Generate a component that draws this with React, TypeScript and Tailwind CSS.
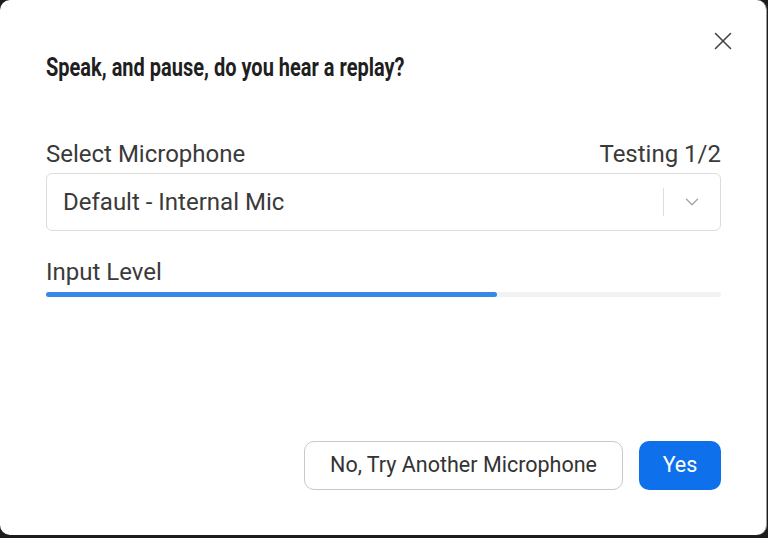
import { X, ChevronDown } from "lucide-react"

export default function App() {
  return (
    <div className="h-[538px] w-[768px] overflow-hidden bg-[#1c1c1c] font-['Roboto',sans-serif]">
      <div className="relative flex h-[535px] w-[767px] flex-col rounded-[10px] border-r border-[#9a9a9a] bg-white pl-[46px] pr-[45px]">
        <button className="absolute right-[28px] top-[26px] text-[#444]" aria-label="Close">
          <X size={30} strokeWidth={1.3} />
        </button>

        <h1 className="mt-[50px] whitespace-nowrap text-[25px] font-bold leading-[36px] text-[#1f1f1f]">
          <span className="inline-block origin-left scale-x-[0.8]">Speak, and pause, do you hear a replay?</span>
        </h1>

        <div className="mt-[53px] flex items-center justify-between text-[24px] leading-[30px] text-[#3a3a3a]">
          <span>Select Microphone</span>
          <span>Testing 1/2</span>
        </div>

        <div className="mt-[4px] flex h-[58px] items-center rounded-[6px] border border-[#dcdcdc] pl-[16px]">
          <span className="flex-1 text-[24px] text-[#3a3a3a]">Default - Internal Mic</span>
          <div className="h-[28px] w-px bg-[#dedede]" />
          <div className="flex w-[56px] items-center justify-center text-[#a8a8a8]">
            <ChevronDown size={22} strokeWidth={1.6} />
          </div>
        </div>

        <div className="mt-[26px] text-[24px] leading-[30px] text-[#3a3a3a]">Input Level</div>
        <div className="mt-[5px] h-[5px] w-full rounded-full bg-[#f1f2f4]">
          <div className="h-full w-[451px] rounded-full bg-[#3a87ea]" />
        </div>

        <div className="mt-auto mb-[45px] flex justify-end gap-[16px]">
          <button className="h-[49px] w-[319px] rounded-[10px] border border-[#c9c9c9] text-[21.5px] text-[#333]">
            No, Try Another Microphone
          </button>
          <button className="h-[49px] w-[82px] rounded-[10px] bg-[#0e71eb] text-[21.5px] text-white">
            Yes
          </button>
        </div>
      </div>
    </div>
  )
}
